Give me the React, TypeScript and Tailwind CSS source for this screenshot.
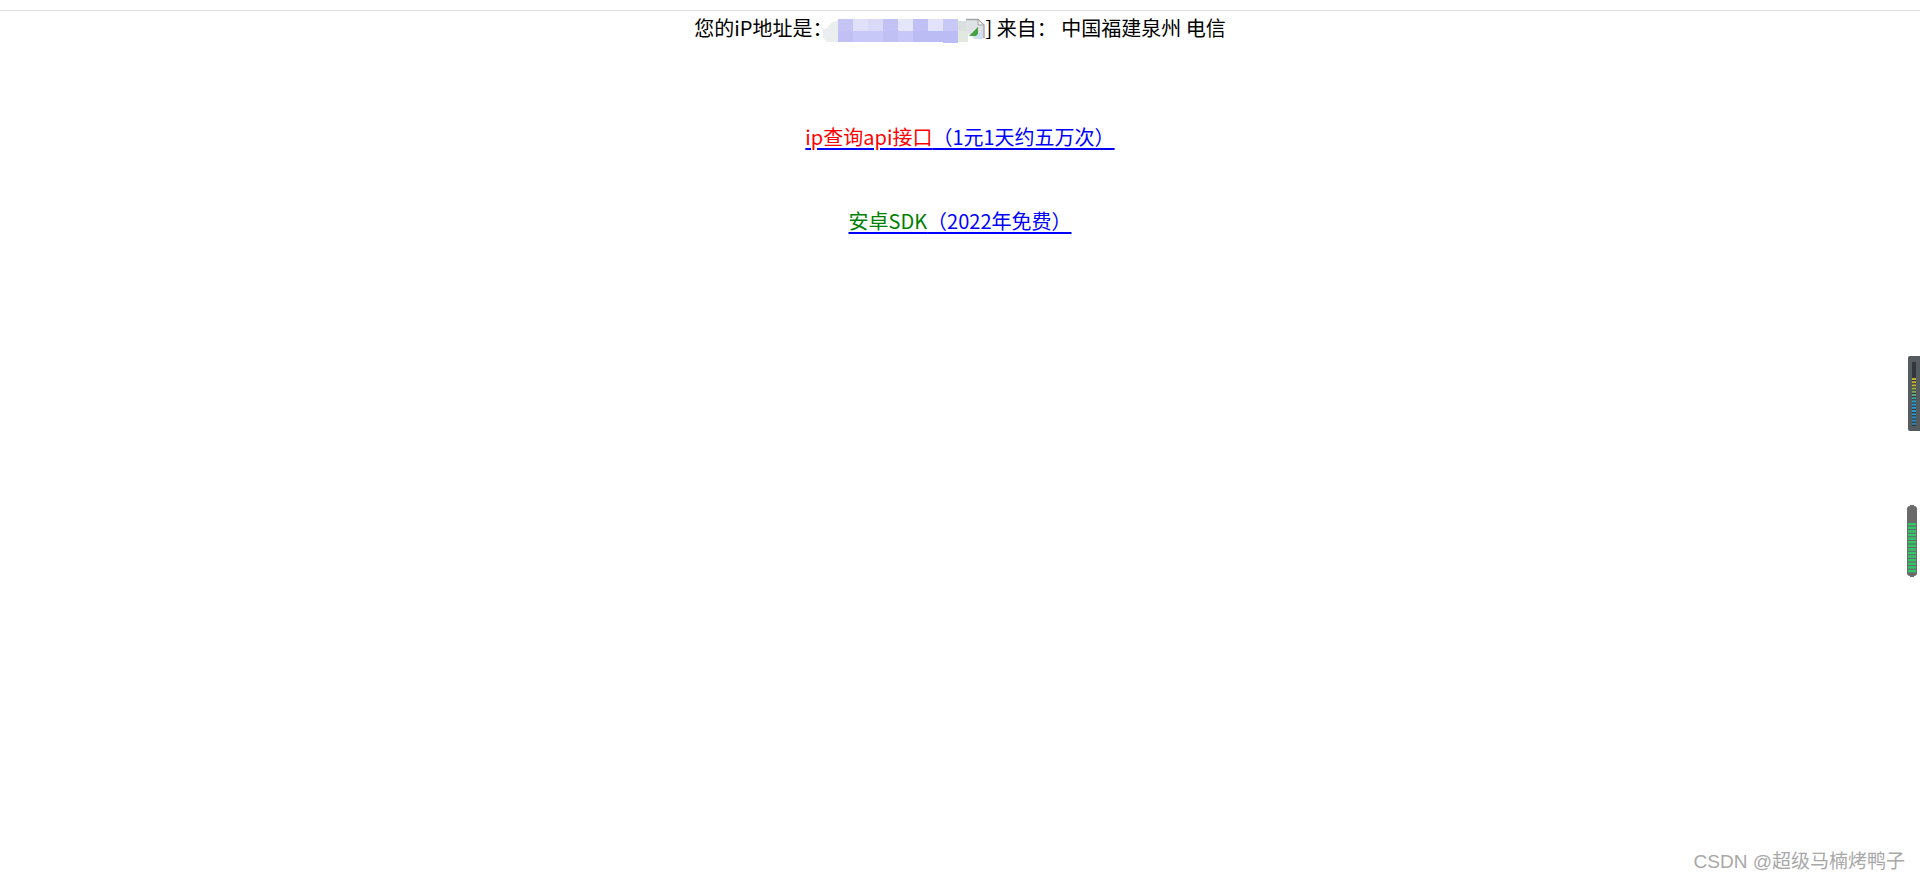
const top = ['#c5c5f5', '#e0e0f8', '#dadaf8', '#c2c2f5', '#e6e6fa', '#c0c0f5', '#e2e2fa', '#c8c8f6']
const bottom = ['#c0c0f5', '#c8c8f8', '#c8c8f8', '#c0c0f5', '#c8c8f8', '#bcbcf5', '#bcbcf5', '#bcbcf5']

function Mosaic() {
  return (
    <svg width="162" height="27" viewBox="0 0 162 27" className="inline-block align-[-7px] -ml-[9px]">
      <path d="M0 13 L4 12 L8 7 L15 4 L15 26 L4 26 L0 22 Z" fill="#ebeeee" />
      {top.map((c, i) => (
        <rect key={i} x={15 + i * 15} y="3" width="15" height="12" fill={c} />
      ))}
      {bottom.map((c, i) => (
        <rect key={i} x={15 + i * 15} y="15" width="15" height={i === 7 ? 13 : 11} fill={c} />
      ))}
      <rect x="135" y="5" width="8" height="10" fill="#d8e0e0" />
      <rect x="135" y="15" width="10" height="11" fill="#e0e8e0" />
      {/* broken image */}
      <path d="M143 3.5 H155 L161 9 V22 H150 L143 15 Z" fill="#dfe3e6" />
      <path d="M143 3.5 H155 L161 9 V22" fill="none" stroke="#a4a4a4" strokeWidth="1.3" />
      <path d="M155 3.5 V9 H161 Z" fill="#f2f2f2" stroke="#a4a4a4" strokeWidth="1" />
      <path d="M146 20 L155 11 V20 Z" fill="#46a046" />
      <path d="M150 23 L160 13 V23 Z" fill="#cfe0f2" />
    </svg>
  )
}

function MeterA() {
  const bars = ['#c0b030', '#c0b030', '#b8b038', '#a0b048', '#80a860', '#60a880', '#40a0a0', '#30a0c0', '#2a9ad0', '#2a9ad0', '#2a98d0', '#2a94c8', '#2a90c0', '#2a8cb8', '#2a88b0']
  return (
    <svg width="12" height="75" viewBox="0 0 12 75" className="absolute right-0 top-[356px]">
      <rect x="0" y="0" width="14" height="75" rx="2" fill="#555c60" />
      <rect x="4" y="6" width="4" height="64" fill="#33363e" />
      {bars.map((c, i) => (
        <rect key={i} x="4" y={22 + i * 3.2} width="4" height="2" fill={c} />
      ))}
    </svg>
  )
}

function MeterB() {
  return (
    <svg width="10" height="72" viewBox="0 0 10 72" className="absolute right-[3px] top-[505px]">
      <rect x="0" y="1" width="10" height="70" rx="3" fill="#6a6a6a" />
      <rect x="3" y="0" width="4" height="72" fill="#6a6a6a" />
      {Array.from({ length: 14 }, (_, i) => (
        <rect key={i} x="1" y={18 + i * 3.6} width="8" height="2.4" fill="#30c868" />
      ))}
    </svg>
  )
}

export default function App() {
  return (
    <div className="relative min-h-[881px] bg-white overflow-hidden text-center text-[20px] font-['Noto_Sans_CJK_SC','Noto_Sans',sans-serif]">
      <div className="h-[11px] border-b border-[#dddddd]" />
      <div className="flex flex-col gap-[50px] leading-[34px]">
        <div className="mb-[25px] text-black whitespace-pre">
          您的iP地址是：
          <Mosaic />] 来自： 中国福建泉州 电信
        </div>
        <div>
          <a href="#" className="text-[#0000ff] underline decoration-2 underline-offset-[3px]">
            <span className="text-[#ff0000]">ip查询api接口</span>（1元1天约五万次）
          </a>
        </div>
        <div>
          <a href="#" className="text-[#0000ff] underline decoration-2 underline-offset-[3px]">
            <span className="text-[#008000]">安卓SDK</span>（2022年免费）
          </a>
        </div>
      </div>
      <MeterA />
      <MeterB />
      <div className="absolute right-[15px] bottom-[7px] text-[19px] leading-[24px] text-[#a8a8a8] font-['Liberation_Sans','Noto_Sans_CJK_SC',sans-serif]">
        CSDN @超级马楠烤鸭子
      </div>
    </div>
  )
}
